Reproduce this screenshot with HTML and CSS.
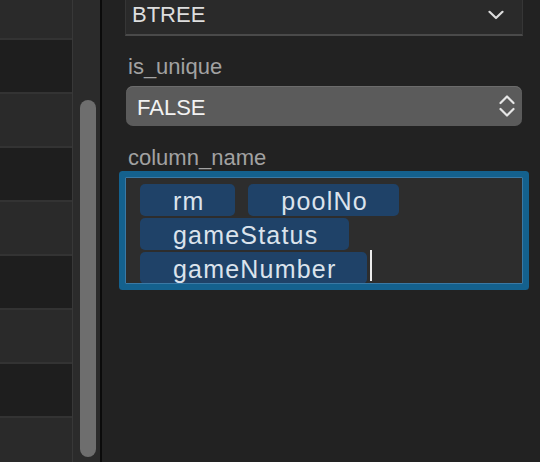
FILE: index.html
```html
<!DOCTYPE html>
<html>
<head>
<meta charset="utf-8">
<link rel="stylesheet" href="styles.css">
</head>
<body>
<div class="app">
  <div class="left">
    <div class="rows">
      <div class="row first"></div>
      <div class="row"></div>
      <div class="row"></div>
      <div class="row"></div>
      <div class="row"></div>
      <div class="row"></div>
      <div class="row"></div>
      <div class="row"></div>
      <div class="row"></div>
    </div>
    <div class="track"><div class="thumb"></div></div>
    <div class="divider"></div>
  </div>
  <div class="right">
    <div class="select plain">
      <span class="sel-text">BTREE</span>
      <svg class="chev" width="16" height="10" viewBox="0 0 16 10"><polyline points="1.5,1.8 8,8 14.5,1.8" fill="none" stroke="#dcdcdc" stroke-width="2.2" stroke-linecap="round" stroke-linejoin="round"/></svg>
    </div>
    <div class="label first-label">is_unique</div>
    <div class="select popup">
      <span class="sel-text">FALSE</span>
      <svg class="updown" width="16" height="24" viewBox="0 0 16 24"><polyline points="1.5,9 8,2.5 14.5,9" fill="none" stroke="#e6e6e6" stroke-width="2.2" stroke-linecap="round" stroke-linejoin="round"/><polyline points="1.5,15 8,21.5 14.5,15" fill="none" stroke="#e6e6e6" stroke-width="2.2" stroke-linecap="round" stroke-linejoin="round"/></svg>
    </div>
    <div class="label second-label">column_name</div>
    <div class="field">
      <div class="tags">
        <span class="tag">rm</span>
        <span class="tag">poolNo</span>
        <span class="tag">gameStatus</span>
        <span class="tail"><span class="tag">gameNumber</span><span class="caret"></span></span>
      </div>
    </div>
  </div>
</div>
</body>
</html>
```

FILE: styles.css
```css
html, body {
  margin: 0;
  padding: 0;
  width: 540px;
  height: 462px;
  overflow: hidden;
  background: #222222;
  font-family: "Liberation Sans", Arial, sans-serif;
}

.app {
  display: flex;
  width: 540px;
  height: 462px;
  overflow: hidden;
}

.left {
  display: flex;
  flex: 0 0 102px;
  height: 462px;
}

.rows {
  flex: 0 0 72px;
  display: flex;
  flex-direction: column;
  border-right: 1px solid #383838;
  overflow: hidden;
}

.row {
  flex: 0 0 52px;
  background: #2a2a2a;
  border-bottom: 2px solid #333333;
}

.row.first {
  flex-basis: 38px;
}

.row:nth-child(even) {
  background: #1e1e1e;
}

.track {
  flex: 0 0 27px;
  background: #2b2b2b;
}

.thumb {
  margin: 100px 0 0 7px;
  width: 16px;
  height: 357px;
  border-radius: 8px;
  background: #6e6e6e;
}

.divider {
  flex: 0 0 2px;
  background: #0b0b0b;
}

.right {
  flex: 1;
  display: flex;
  flex-direction: column;
  padding-left: 23px;
  padding-right: 17px;
  background: #222222;
}

.select {
  display: flex;
  align-items: center;
  justify-content: space-between;
  box-sizing: border-box;
  font-size: 22px;
}

.select.plain {
  margin-top: -5px;
  height: 41px;
  padding: 1px 18px 0 6px;
  background: #2a2a2a;
  border-left: 1px solid #363636;
  border-right: 1px solid #363636;
  border-bottom: 2px solid #4a4a4a;
  color: #dedede;
  line-height: 38px;
}

.select.popup {
  margin: 6px 1px 0 1px;
  height: 40px;
  padding: 3px 7px 0 11px;
  background: #5b5b5b;
  border-radius: 7px;
  box-shadow: inset 0 1px 0 #6c6c6c;
  color: #f2f2f2;
  line-height: 37px;
}

.select.popup .updown {
  margin-top: -3px;
}

.select.plain .chev {
  margin-top: -1px;
}

.label {
  font-size: 22px;
  line-height: 26px;
  color: #a2a2a2;
  padding-left: 3px;
}

.first-label {
  margin-top: 18px;
}

.second-label {
  margin-top: 19px;
}

.field {
  margin-top: 6px;
  box-sizing: border-box;
  height: 107px;
  border: 1px solid #3a79a5;
  border-radius: 1px;
  background: #2d2d2d;
  box-shadow: 0 0 0 6px #14618e;
  overflow: hidden;
  padding: 6px 14px 0 14px;
}

.tags {
  display: flex;
  flex-wrap: wrap;
  column-gap: 13px;
  row-gap: 2px;
  align-items: flex-start;
}

.tag {
  display: block;
  box-sizing: border-box;
  height: 32px;
  padding: 2px 30.8px 0 33px;
  line-height: 30px;
  font-size: 25px;
  letter-spacing: 1.2px;
  color: #dbe3ec;
  background: #1f4268;
  border-radius: 5px;
  white-space: nowrap;
}

.tail {
  display: flex;
  align-items: flex-start;
}

.caret {
  display: block;
  width: 2px;
  height: 31px;
  margin: -2px 0 0 3px;
  background: #ececec;
}
```
